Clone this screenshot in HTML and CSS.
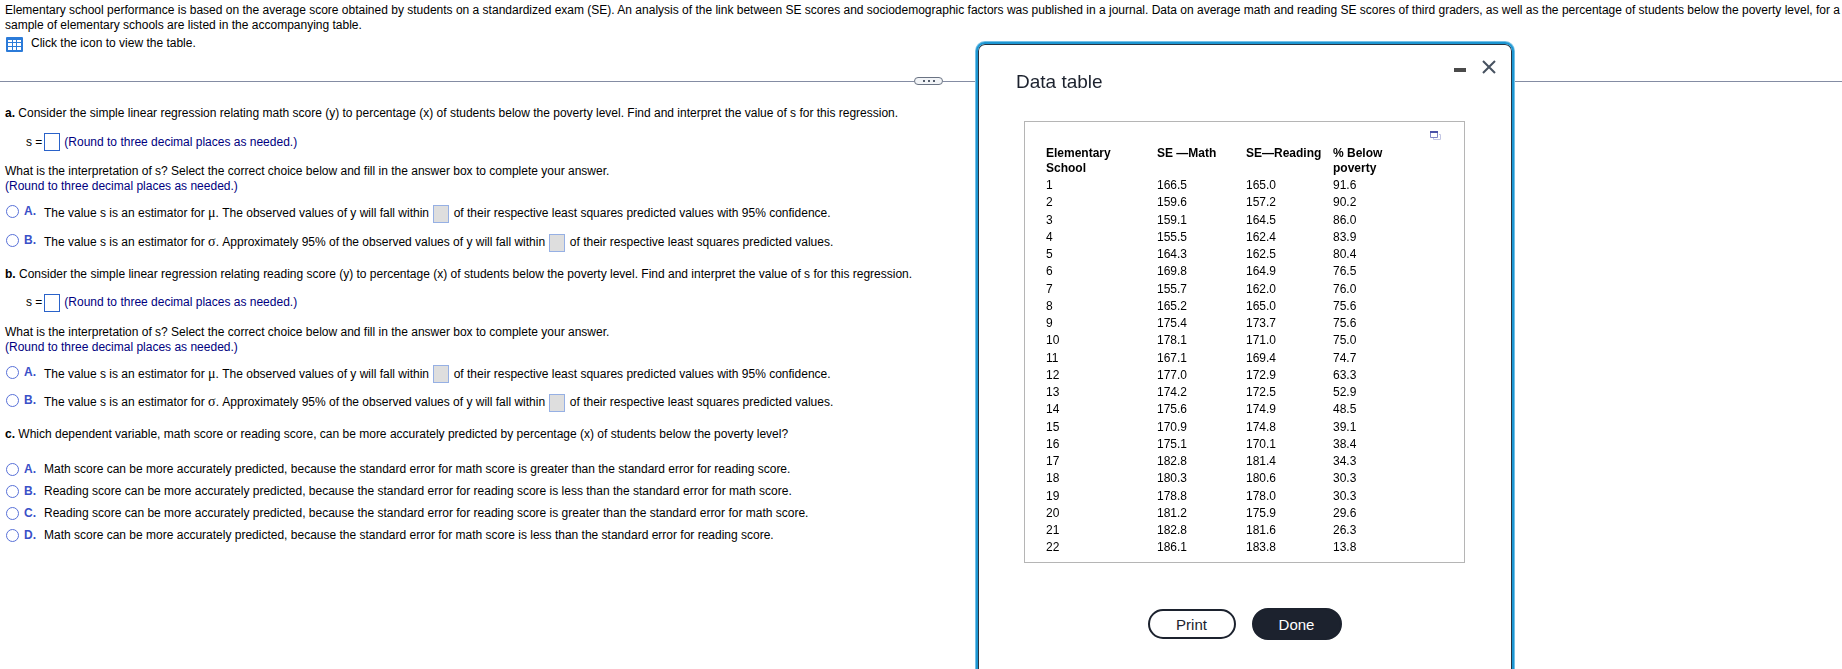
FILE: index.html
```html
<!DOCTYPE html>
<html lang="en">

<head>
    <meta charset="UTF-8">
    <meta name="viewport" content="width=device-width, initial-scale=1.0">
    <title>Elementary school performance</title>
    <link rel="stylesheet" href="styles.css">
</head>

<body>
    <header class="intro">
        <p class="intro-text">Elementary school performance is based on the average score obtained by students on a standardized exam (SE). An analysis of the link between SE scores and sociodemographic factors was published in a journal. Data on average math and reading SE scores of third graders, as well as the percentage of students below the poverty level, for a sample of elementary schools are listed in the accompanying table.</p>
        <button class="table-link" type="button">
            <svg width="17" height="15" viewBox="0 0 17 15">
                <rect width="17" height="15" rx="1" fill="#2b7bd9"/>
                <path d="M2 3h4v2H2zM7 3h3v2H7zM11 3h4v2h-4zM2 6h4v3H2zM7 6h3v3H7zM11 6h4v3h-4zM2 10h4v3H2zM7 10h3v3H7zM11 10h4v3h-4z" fill="#fff"/>
            </svg>
            Click the icon to view the table.
        </button>
    </header>

    <div class="divider">
        <button class="divider-handle" type="button" aria-label="Resize">
            <span class="dot"></span><span class="dot"></span><span class="dot"></span>
        </button>
    </div>

    <main class="questions">
        <section class="part">
            <p><b>a.</b> Consider the simple linear regression relating math score (y) to percentage (x) of students below the poverty level. Find and interpret the value of s for this regression.</p>
            <div class="answer">
                <label for="s-math">s =</label>
                <input class="box" id="s-math" type="text">
                <span class="hint">(Round to three decimal places as needed.)</span>
            </div>
            <p>What is the interpretation of s? Select the correct choice below and fill in the answer box to complete your answer.</p>
            <p class="hint">(Round to three decimal places as needed.)</p>
            <div class="choices">
                <div class="choice">
                    <input class="radio" type="radio" name="part-a" id="a1">
                    <label class="letter" for="a1">A.</label>
                    <div class="choice-text">The value s is an estimator for <span class="greek">μ</span>. The observed values of y will fall within <input class="box box-off" type="text" aria-label="Range" disabled> of their respective least squares predicted values with 95% confidence.</div>
                </div>
                <div class="choice">
                    <input class="radio" type="radio" name="part-a" id="a2">
                    <label class="letter" for="a2">B.</label>
                    <div class="choice-text">The value s is an estimator for <span class="greek">σ</span>. Approximately 95% of the observed values of y will fall within <input class="box box-off" type="text" aria-label="Range" disabled> of their respective least squares predicted values.</div>
                </div>
            </div>
        </section>

        <section class="part">
            <p><b>b.</b> Consider the simple linear regression relating reading score (y) to percentage (x) of students below the poverty level. Find and interpret the value of s for this regression.</p>
            <div class="answer">
                <label for="s-reading">s =</label>
                <input class="box" id="s-reading" type="text">
                <span class="hint">(Round to three decimal places as needed.)</span>
            </div>
            <p>What is the interpretation of s? Select the correct choice below and fill in the answer box to complete your answer.</p>
            <p class="hint">(Round to three decimal places as needed.)</p>
            <div class="choices">
                <div class="choice">
                    <input class="radio" type="radio" name="part-b" id="b1">
                    <label class="letter" for="b1">A.</label>
                    <div class="choice-text">The value s is an estimator for <span class="greek">μ</span>. The observed values of y will fall within <input class="box box-off" type="text" aria-label="Range" disabled> of their respective least squares predicted values with 95% confidence.</div>
                </div>
                <div class="choice">
                    <input class="radio" type="radio" name="part-b" id="b2">
                    <label class="letter" for="b2">B.</label>
                    <div class="choice-text">The value s is an estimator for <span class="greek">σ</span>. Approximately 95% of the observed values of y will fall within <input class="box box-off" type="text" aria-label="Range" disabled> of their respective least squares predicted values.</div>
                </div>
            </div>
        </section>

        <section class="part">
            <p><b>c.</b> Which dependent variable, math score or reading score, can be more accurately predicted by percentage (x) of students below the poverty level?</p>
            <div class="choices choices-plain">
                <div class="choice">
                    <input class="radio" type="radio" name="part-c" id="c1">
                    <label class="letter" for="c1">A.</label>
                    <div class="choice-text">Math score can be more accurately predicted, because the standard error for math score is greater than the standard error for reading score.</div>
                </div>
                <div class="choice">
                    <input class="radio" type="radio" name="part-c" id="c2">
                    <label class="letter" for="c2">B.</label>
                    <div class="choice-text">Reading score can be more accurately predicted, because the standard error for reading score is less than the standard error for math score.</div>
                </div>
                <div class="choice">
                    <input class="radio" type="radio" name="part-c" id="c3">
                    <label class="letter" for="c3">C.</label>
                    <div class="choice-text">Reading score can be more accurately predicted, because the standard error for reading score is greater than the standard error for math score.</div>
                </div>
                <div class="choice">
                    <input class="radio" type="radio" name="part-c" id="c4">
                    <label class="letter" for="c4">D.</label>
                    <div class="choice-text">Math score can be more accurately predicted, because the standard error for math score is less than the standard error for reading score.</div>
                </div>
            </div>
        </section>
    </main>

    <div class="dialog" role="dialog" aria-labelledby="dialog-title">
        <div class="dialog-head">
            <h2 id="dialog-title">Data table</h2>
            <div class="dialog-tools">
                <button class="icon-button" type="button" aria-label="Minimize">
                    <svg width="14" height="14" viewBox="0 0 14 14"><path d="M1 8h12v4H1z" fill="#4a4a4a"/></svg>
                </button>
                <button class="icon-button" type="button" aria-label="Close">
                    <svg width="14" height="14" viewBox="0 0 14 14"><path d="M1 1l12 12M13 1L1 13" stroke="#475260" stroke-width="2" fill="none"/></svg>
                </button>
            </div>
        </div>
        <div class="panel">
            <button class="icon-button popout" type="button" aria-label="Copy data">
                <svg width="11" height="10" viewBox="0 0 11 10">
                    <path d="M3.500 4v4.500h7v-5H9" fill="none" stroke="#c3c6e4"/>
                    <path d="M.5 1v5.500h7V1z" fill="#fff" stroke="#7f86c6"/>
                    <path d="M0 0h8v2H0z" fill="#4a52a8"/>
                </svg>
            </button>
            <table class="data">
                <thead>
                    <tr><th class="col-school">Elementary<br>School</th><th class="col-math">SE —Math</th><th class="col-reading">SE—Reading</th><th class="col-poverty">% Below<br>poverty</th></tr>
                </thead>
                <tbody>
                    <tr><td>1</td><td>166.5</td><td>165.0</td><td>91.6</td></tr>
                    <tr><td>2</td><td>159.6</td><td>157.2</td><td>90.2</td></tr>
                    <tr><td>3</td><td>159.1</td><td>164.5</td><td>86.0</td></tr>
                    <tr><td>4</td><td>155.5</td><td>162.4</td><td>83.9</td></tr>
                    <tr><td>5</td><td>164.3</td><td>162.5</td><td>80.4</td></tr>
                    <tr><td>6</td><td>169.8</td><td>164.9</td><td>76.5</td></tr>
                    <tr><td>7</td><td>155.7</td><td>162.0</td><td>76.0</td></tr>
                    <tr><td>8</td><td>165.2</td><td>165.0</td><td>75.6</td></tr>
                    <tr><td>9</td><td>175.4</td><td>173.7</td><td>75.6</td></tr>
                    <tr><td>10</td><td>178.1</td><td>171.0</td><td>75.0</td></tr>
                    <tr><td>11</td><td>167.1</td><td>169.4</td><td>74.7</td></tr>
                    <tr><td>12</td><td>177.0</td><td>172.9</td><td>63.3</td></tr>
                    <tr><td>13</td><td>174.2</td><td>172.5</td><td>52.9</td></tr>
                    <tr><td>14</td><td>175.6</td><td>174.9</td><td>48.5</td></tr>
                    <tr><td>15</td><td>170.9</td><td>174.8</td><td>39.1</td></tr>
                    <tr><td>16</td><td>175.1</td><td>170.1</td><td>38.4</td></tr>
                    <tr><td>17</td><td>182.8</td><td>181.4</td><td>34.3</td></tr>
                    <tr><td>18</td><td>180.3</td><td>180.6</td><td>30.3</td></tr>
                    <tr><td>19</td><td>178.8</td><td>178.0</td><td>30.3</td></tr>
                    <tr><td>20</td><td>181.2</td><td>175.9</td><td>29.6</td></tr>
                    <tr><td>21</td><td>182.8</td><td>181.6</td><td>26.3</td></tr>
                    <tr><td>22</td><td>186.1</td><td>183.8</td><td>13.8</td></tr>
                </tbody>
            </table>
        </div>
        <div class="dialog-actions">
            <button class="btn" type="button">Print</button>
            <button class="btn btn-dark" type="button">Done</button>
        </div>
    </div>
</body>

</html>
```
FILE: styles.css
```css
* {
    box-sizing: border-box;
}

html {
    overflow: hidden;
}

body {
    margin: 0;
    font-family: Arial, "Liberation Sans", sans-serif;
    font-size: 12px;
    line-height: 15px;
    color: #000;
    background-color: #fff;
    overflow: hidden;
}

p {
    margin: 0;
}

button,
input {
    font: inherit;
    margin: 0;
    padding: 0;
}

button {
    cursor: pointer;
}

.intro {
    padding: 3px 0 0 5px;
}

.table-link {
    display: flex;
    align-items: flex-start;
    gap: 8px;
    margin-top: 3px;
    padding: 0 1px;
    border: none;
    background: none;
    color: #000;
}

.table-link svg {
    margin-top: 1px;
}

/* line between the problem and its parts */
.divider {
    display: flex;
    align-items: center;
    width: calc(100% + 15px);
    margin-top: 25px;
}

.divider::before,
.divider::after {
    content: "";
    flex: 1;
    height: 1px;
    background-color: #848ca3;
}

.divider-handle {
    display: flex;
    align-items: center;
    justify-content: center;
    gap: 3px;
    width: 29px;
    height: 8px;
    border: 1px solid #6a7383;
    border-radius: 4px;
    background-color: #f2f4f7;
}

.dot {
    width: 2px;
    height: 2px;
    background-color: #555e6d;
}

.questions {
    padding: 21px 0 0 5px;
    white-space: nowrap;
}

.part {
    margin-bottom: 15px;
}

.answer {
    display: flex;
    align-items: center;
    padding: 12px 0 13px 21px;
}

.answer .hint {
    margin-left: 4px;
}

.answer label {
    margin-right: 2px;
}

.hint {
    color: #000080;
}

.box {
    width: 16px;
    height: 18px;
    border: 1px solid #2a62c9;
    background-color: #fff;
}

.box-off {
    border-color: #96b0e4;
    background-color: #dedede;
    margin: 0 1px;
    vertical-align: middle;
}

.choices {
    display: flex;
    flex-direction: column;
    gap: 10px;
    padding-top: 10px;
}

.choice {
    display: flex;
    align-items: flex-start;
}

.radio {
    appearance: none;
    width: 13px;
    height: 13px;
    margin: 1px 5px 0 1px;
    border: 1px solid #5871d8;
    border-radius: 50%;
    background-color: #fff;
}

.letter {
    width: 20px;
    color: #3a50c8;
    font-weight: bold;
}

.choice-text {
    line-height: 18px;
}

.greek {
    font-family: "Times New Roman", "Liberation Serif", serif;
    font-size: 14px;
    line-height: 1;
}

.choices-plain {
    gap: 7px;
    padding-top: 20px;
}

.choices-plain .choice-text {
    line-height: 15px;
}

/* floating data table window */
.dialog {
    position: fixed;
    top: 42px;
    left: 976px;
    bottom: -20px;
    width: 538px;
    padding: 0 47px 0 46px;
    border: 2px solid #1c96d2;
    border-radius: 9px;
    background-color: #fff;
    box-shadow: 0 0 0 1px #74c0e6, inset 0 0 0 1px #263442;
    white-space: nowrap;
}

.dialog-head {
    display: flex;
    justify-content: space-between;
    margin: 0 -31px 0 -8px;
    padding-top: 16px;
}

.dialog-head h2 {
    margin: 12px 0 0;
    color: #1c222e;
    font-size: 19px;
    font-weight: normal;
    line-height: 20px;
}

.dialog-tools {
    display: flex;
    gap: 15px;
}

.icon-button {
    display: flex;
    height: 14px;
    border: none;
    background: none;
}

.panel {
    display: flex;
    flex-direction: row-reverse;
    justify-content: space-between;
    align-items: flex-start;
    margin-top: 29px;
    padding: 9px 23px 5px 21px;
    border: 1px solid #b5b5b5;
}

.data {
    margin-top: 14px;
    border-collapse: collapse;
    table-layout: fixed;
    width: 360px;
}

.data th,
.data td {
    padding: 1px 0;
    text-align: left;
    vertical-align: top;
}

.data tbody tr:nth-child(4n+2) td {
    padding-bottom: 2px;
}

.col-school {
    width: 111px;
}

.col-math {
    width: 89px;
}

.col-reading {
    width: 87px;
}

.dialog-actions {
    display: flex;
    align-items: center;
    justify-content: center;
    gap: 16px;
    margin-top: 45px;
}

.btn {
    width: 88px;
    height: 30px;
    border: 2px solid #1c222e;
    border-radius: 16px;
    background-color: #fff;
    color: #1c222e;
    font-size: 15px;
}

.btn-dark {
    width: 90px;
    height: 32px;
    background-color: #1c222e;
    color: #fff;
}
```
